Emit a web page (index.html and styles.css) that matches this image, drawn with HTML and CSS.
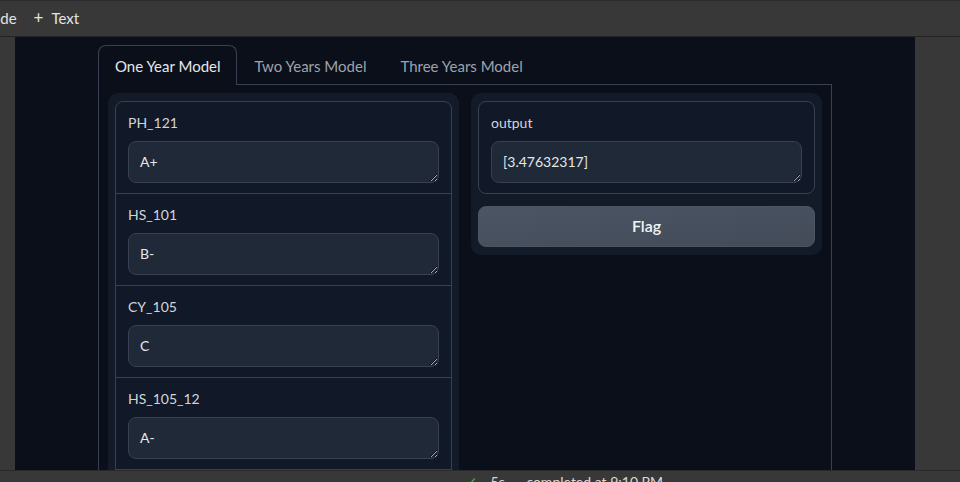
FILE: index.html
```html
<!DOCTYPE html>
<html>
<head lang="en">
    <meta charset="UTF-8">
    <title>Grade Predictor</title>
    <link rel="stylesheet" href="styles.css">
</head>
<body>
<div class="toolbar">
    <span class="tool tool-clipped"><span class="plus">+</span>Code</span>
    <span class="tool"><span class="plus">+</span>Text</span>
</div>
<div class="main">
    <div class="gutter"></div>
    <div class="output">
        <div class="gradio">
            <div class="tab-nav">
                <button class="tab selected">One Year Model</button>
                <button class="tab">Two Years Model</button>
                <button class="tab">Three Years Model</button>
            </div>
            <div class="tab-content">
                <div class="panel">
                    <div class="block">
                        <div class="field">
                            <label>PH_121</label>
                            <textarea rows="1">A+</textarea>
                        </div>
                        <div class="field">
                            <label>HS_101</label>
                            <textarea rows="1">B-</textarea>
                        </div>
                        <div class="field">
                            <label>CY_105</label>
                            <textarea rows="1">C</textarea>
                        </div>
                        <div class="field">
                            <label>HS_105_12</label>
                            <textarea rows="1">A-</textarea>
                        </div>
                        <div class="field">
                            <label>MT_111</label>
                            <textarea rows="1">B</textarea>
                        </div>
                    </div>
                </div>
                <div class="panel panel-output">
                    <div class="block">
                        <div class="field">
                            <label>output</label>
                            <textarea rows="1">[3.47632317]</textarea>
                        </div>
                    </div>
                    <button class="flag">Flag</button>
                </div>
            </div>
        </div>
    </div>
    <div class="side"></div>
</div>
<div class="statusbar">
    <span class="check">&#10003;</span>
    <span class="duration">5s</span>
    <span class="done">completed at 9:10 PM</span>
</div>
</body>
</html>
```

FILE: styles.css
```css
body, html {
    margin: 0;
    height: 482px;
    width: 960px;
    overflow: hidden;
}

body {
    display: flex;
    flex-direction: column;
    background-color: #383838;
    font-family: Lato, "Liberation Sans", sans-serif;
}

/* Notebook chrome */
.toolbar {
    flex: none;
    height: 37px;
    box-sizing: border-box;
    display: flex;
    align-items: center;
    gap: 17px;
    padding-bottom: 2px;
    border-top: 1px solid #2c2c2c;
    border-bottom: 1px solid #242424;
    color: #e3e3e3;
    font-size: 15px;
    line-height: 18px;
    overflow: hidden;
}

.tool-clipped {
    margin-left: -36px;
}

.plus {
    margin-right: 8px;
    font-size: 17px;
}

.main {
    flex: none;
    height: 433px;
    display: flex;
}

.gutter {
    width: 15px;
}

.output {
    width: 900px;
    background-color: #0b0f19;
    overflow: hidden;
}

.side {
    flex: 1;
}

.statusbar {
    flex: 1;
    border-top: 1px solid #2a2a2a;
    color: #d8d8d8;
    font-size: 14px;
    line-height: 18px;
    padding-top: 2px;
    padding-left: 466px;
    white-space: nowrap;
}

.check {
    color: #3fb950;
    margin-right: 9px;
}

.duration {
    margin-right: 18px;
}

/* Gradio app */
.gradio {
    width: 734px;
    margin-left: 83px;
    padding-top: 8px;
}

.tab-nav {
    display: flex;
    border-bottom: 1px solid #374151;
}

.tab {
    height: 40px;
    margin-bottom: -1px;
    padding: 0 15px 0 16px;
    border: 1px solid transparent;
    border-bottom: none;
    border-radius: 8px 8px 0 0;
    background: none;
    color: #9ca3af;
    font-family: inherit;
    font-size: 15px;
}

.tab + .tab {
    padding-left: 17px;
}

.tab.selected {
    border-color: #374151;
    background-color: #0b0f19;
    color: #e5e7eb;
}

.tab-content {
    display: grid;
    grid-template-columns: 1fr 1fr;
    gap: 12px;
    align-items: start;
    padding: 8px 9px;
    border: 1px solid #374151;
    border-top: none;
}

.panel {
    padding: 8px 7px;
    border-radius: 10px;
    background-color: #131a28;
}

.block {
    border: 1px solid #374151;
    border-radius: 8px;
    background-color: #111827;
}

.field {
    display: flex;
    flex-direction: column;
    gap: 8px;
    padding: 11px 12px 10px;
}

.field + .field {
    border-top: 1px solid #374151;
}

.field label {
    color: #d1d5db;
    font-size: 14px;
    line-height: 20px;
}

.field textarea {
    height: 42px;
    box-sizing: border-box;
    padding: 10px 11px;
    border: 1px solid #374151;
    border-radius: 8px;
    background-color: #1f2937;
    color: #e5e7eb;
    font-family: inherit;
    font-size: 14px;
    line-height: 20px;
    outline: none;
    color-scheme: dark;
}

.flag {
    width: 100%;
    height: 41px;
    margin-top: 12px;
    padding-bottom: 3px;
    border: 1px solid #4b5563;
    border-radius: 8px;
    background: linear-gradient(to bottom right, #4b5563, #434b59);
    color: #f3f4f6;
    font-family: inherit;
    font-size: 16px;
    font-weight: 600;
}
```
